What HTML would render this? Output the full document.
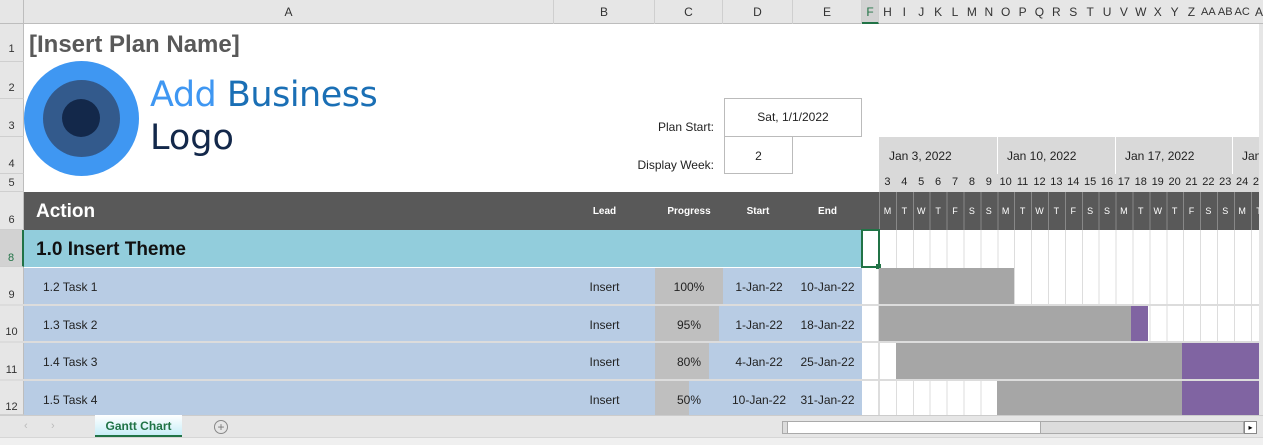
<!DOCTYPE html>
<html><head><meta charset="utf-8"><style>
*{margin:0;padding:0;box-sizing:border-box}
body{width:1263px;height:445px;overflow:hidden;background:#fff;font-family:"Liberation Sans",sans-serif;position:relative}
.a{position:absolute}
.hdr{top:0;left:0;width:1263px;height:24px;background:#e6e6e6;border-bottom:1px solid #bdbdbd}
.hc{position:absolute;top:0;height:24px;line-height:24px;text-align:center;font-size:12px;color:#333;border-right:1px solid #cfcfcf}
.rn{position:absolute;left:0;width:24px;background:#e6e6e6;border-bottom:1px solid #cfcfcf;border-right:1px solid #bdbdbd;font-size:11px;color:#333;text-align:center}
.flex{display:flex}
.flex div{width:16.9px;flex:none;text-align:center}
.t{font-size:12px;color:#222;position:absolute;text-align:center}
</style></head><body>
<div class="a hdr"></div>
<div class="hc" style="left:0;width:24px;border-right:1px solid #bdbdbd"></div>
<div class="hc" style="left:24px;width:530px">A</div>
<div class="hc" style="left:554px;width:101px">B</div>
<div class="hc" style="left:655px;width:68px">C</div>
<div class="hc" style="left:723px;width:70px">D</div>
<div class="hc" style="left:793px;width:69px">E</div>
<div class="hc" style="left:862px;width:17px;background:#d2d2d2;border-bottom:2px solid #217346;color:#217346">F</div>
<div class="a flex" style="left:879px;top:0;height:24px;line-height:24px;font-size:12px;color:#333">
<div>H</div><div>I</div><div>J</div><div>K</div><div>L</div><div>M</div><div>N</div><div>O</div><div>P</div><div>Q</div><div>R</div><div>S</div><div>T</div><div>U</div><div>V</div><div>W</div><div>X</div><div>Y</div><div>Z</div><div style="font-size:11px">AA</div><div style="font-size:11px">AB</div><div style="font-size:11px">AC</div><div>A</div></div>

<!-- row numbers -->
<div class="rn" style="top:24px;height:38px;padding-top:19px">1</div>
<div class="rn" style="top:62px;height:37px;padding-top:20px">2</div>
<div class="rn" style="top:99px;height:38px;padding-top:21px">3</div>
<div class="rn" style="top:137px;height:37px;padding-top:21px">4</div>
<div class="rn" style="top:174px;height:18px;padding-top:3px">5</div>
<div class="rn" style="top:192px;height:38px;padding-top:22px">6</div>
<div class="rn" style="top:230px;height:37px;padding-top:22px;background:#d2d2d2;color:#217346;border-right:2px solid #217346">8</div>
<div class="rn" style="top:267px;height:38px;padding-top:22px">9</div>
<div class="rn" style="top:305px;height:37px;padding-top:21px">10</div>
<div class="rn" style="top:342px;height:38px;padding-top:22px">11</div>
<div class="rn" style="top:380px;height:35px;padding-top:21px">12</div>

<!-- title + logo -->
<div class="a" style="left:29px;top:31px;font-size:24px;font-weight:bold;color:#595959">[Insert Plan Name]</div>
<div class="a" style="left:24px;top:61px;width:115px;height:115px;border-radius:50%;background:#3f97f2"></div>
<div class="a" style="left:43px;top:80px;width:77px;height:77px;border-radius:50%;background:#335a8c"></div>
<div class="a" style="left:62px;top:99px;width:38px;height:38px;border-radius:50%;background:#13284a"></div>
<div class="a" style="left:150px;top:75px;font-size:35px;color:#3f97f2;font-family:'DejaVu Sans',sans-serif;letter-spacing:-0.5px">Add <span style="color:#1a6fb5">Business</span></div>
<div class="a" style="left:150px;top:118px;font-size:35px;color:#13284a;font-family:'DejaVu Sans',sans-serif">Logo</div>

<!-- plan start -->
<div class="t" style="left:600px;top:120px;width:114px;text-align:right">Plan Start:</div>
<div class="t" style="left:600px;top:158px;width:114px;text-align:right">Display Week:</div>
<div class="a" style="left:724px;top:98px;width:138px;height:39px;border:1px solid #bbb"></div>
<div class="t" style="left:724px;top:110px;width:138px">Sat, 1/1/2022</div>
<div class="a" style="left:724px;top:136px;width:69px;height:38px;border:1px solid #bbb"></div>
<div class="t" style="left:724px;top:149px;width:69px">2</div>

<!-- gantt header -->
<div class="a" style="left:879px;top:137px;width:380px;height:55px;background:#d9d9d9"></div>
<div class="a" style="left:997px;top:137px;width:1px;height:37px;background:#fff"></div>
<div class="a" style="left:1115px;top:137px;width:1px;height:37px;background:#fff"></div>
<div class="a" style="left:1232px;top:137px;width:1px;height:37px;background:#fff"></div>
<div class="t" style="left:889px;top:149px;text-align:left">Jan 3, 2022</div>
<div class="t" style="left:1007px;top:149px;text-align:left">Jan 10, 2022</div>
<div class="t" style="left:1125px;top:149px;text-align:left">Jan 17, 2022</div>
<div class="t" style="left:1242px;top:149px;text-align:left;width:17px;overflow:hidden">Jan</div>
<div class="a flex" style="left:879px;top:176px;width:380px;overflow:hidden;font-size:11px;color:#222">
<div>3</div><div>4</div><div>5</div><div>6</div><div>7</div><div>8</div><div>9</div><div>10</div><div>11</div><div>12</div><div>13</div><div>14</div><div>15</div><div>16</div><div>17</div><div>18</div><div>19</div><div>20</div><div>21</div><div>22</div><div>23</div><div>24</div><div>25</div></div>

<!-- dark header row -->
<div class="a" style="left:24px;top:192px;width:1235px;height:38px;background:#595959"></div>
<div class="a" style="left:36px;top:201px;font-size:19px;font-weight:bold;color:#fff">Action</div>
<div class="t" style="left:554px;top:206px;width:101px;color:#fff;font-weight:bold;font-size:10px">Lead</div>
<div class="t" style="left:655px;top:206px;width:68px;color:#fff;font-weight:bold;font-size:10px">Progress</div>
<div class="t" style="left:723px;top:206px;width:70px;color:#fff;font-weight:bold;font-size:10px">Start</div>
<div class="t" style="left:793px;top:206px;width:69px;color:#fff;font-weight:bold;font-size:10px">End</div>
<div class="a flex" style="left:879px;top:192px;width:380px;height:38px;line-height:38px;overflow:hidden;font-size:9px;color:#fff;background:repeating-linear-gradient(90deg,#888 0 1px,transparent 1px 16.9px)">
<div>M</div><div>T</div><div>W</div><div>T</div><div>F</div><div>S</div><div>S</div><div>M</div><div>T</div><div>W</div><div>T</div><div>F</div><div>S</div><div>S</div><div>M</div><div>T</div><div>W</div><div>T</div><div>F</div><div>S</div><div>S</div><div>M</div><div>T</div></div>

<!-- gantt grid body -->
<div class="a" style="left:879px;top:230px;width:380px;height:185px;background:repeating-linear-gradient(90deg,#ddd 0 1px,#fff 1px 16.9px)"></div>
<div class="a" style="left:862px;top:230px;width:17px;height:185px;border-right:1px solid #ddd"></div>

<!-- theme row -->
<div class="a" style="left:24px;top:230px;width:838px;height:37px;background:#92cddc"></div>
<div class="a" style="left:36px;top:239px;font-size:19px;font-weight:bold;color:#111">1.0 Insert Theme</div>
<div class="a" style="left:861px;top:229px;width:19px;height:39px;border:2px solid #217346"></div>
<div class="a" style="left:876px;top:264px;width:5px;height:5px;background:#217346"></div>

<!-- task rows -->
<div class="a" style="left:24px;top:268px;width:838px;height:36px;background:#b8cce4"></div>
<div class="a" style="left:24px;top:306px;width:838px;height:35px;background:#b8cce4"></div>
<div class="a" style="left:24px;top:343px;width:838px;height:36px;background:#b8cce4"></div>
<div class="a" style="left:24px;top:381px;width:838px;height:34px;background:#b8cce4"></div>
<div class="a" style="left:655px;top:268px;width:68px;height:36px;background:#bfbfbf"></div>
<div class="a" style="left:655px;top:306px;width:64px;height:35px;background:#bfbfbf"></div>
<div class="a" style="left:655px;top:343px;width:54px;height:36px;background:#bfbfbf"></div>
<div class="a" style="left:655px;top:381px;width:34px;height:34px;background:#bfbfbf"></div>
<div class="a" style="left:0;top:304px;width:1259px;height:2px;background:#dcdcdc"></div>
<div class="a" style="left:0;top:341px;width:1259px;height:2px;background:#dcdcdc"></div>
<div class="a" style="left:0;top:379px;width:1259px;height:2px;background:#dcdcdc"></div>

<div class="t" style="left:43px;top:280px;text-align:left">1.2 Task 1</div>
<div class="t" style="left:43px;top:318px;text-align:left">1.3 Task 2</div>
<div class="t" style="left:43px;top:355px;text-align:left">1.4 Task 3</div>
<div class="t" style="left:43px;top:393px;text-align:left">1.5 Task 4</div>
<div class="t" style="left:554px;top:280px;width:101px">Insert</div>
<div class="t" style="left:554px;top:318px;width:101px">Insert</div>
<div class="t" style="left:554px;top:355px;width:101px">Insert</div>
<div class="t" style="left:554px;top:393px;width:101px">Insert</div>
<div class="t" style="left:655px;top:280px;width:68px">100%</div>
<div class="t" style="left:655px;top:318px;width:68px">95%</div>
<div class="t" style="left:655px;top:355px;width:68px">80%</div>
<div class="t" style="left:655px;top:393px;width:68px">50%</div>
<div class="t" style="left:723px;top:280px;width:72px">1-Jan-22</div>
<div class="t" style="left:723px;top:318px;width:72px">1-Jan-22</div>
<div class="t" style="left:723px;top:355px;width:72px">4-Jan-22</div>
<div class="t" style="left:723px;top:393px;width:72px">10-Jan-22</div>
<div class="t" style="left:793px;top:280px;width:69px">10-Jan-22</div>
<div class="t" style="left:793px;top:318px;width:69px">18-Jan-22</div>
<div class="t" style="left:793px;top:355px;width:69px">25-Jan-22</div>
<div class="t" style="left:793px;top:393px;width:69px">31-Jan-22</div>

<!-- bars -->
<div class="a" style="left:879px;top:268px;width:135px;height:36px;background:#a6a6a6"></div>
<div class="a" style="left:879px;top:306px;width:252px;height:35px;background:#a6a6a6"></div>
<div class="a" style="left:1131px;top:306px;width:17px;height:35px;background:#8064a2"></div>
<div class="a" style="left:896px;top:343px;width:286px;height:36px;background:#a6a6a6"></div>
<div class="a" style="left:1182px;top:343px;width:77px;height:36px;background:#8064a2"></div>
<div class="a" style="left:997px;top:381px;width:185px;height:34px;background:#a6a6a6"></div>
<div class="a" style="left:1182px;top:381px;width:77px;height:34px;background:#8064a2"></div>

<!-- right scrollbar strip -->
<div class="a" style="left:1259px;top:24px;width:4px;height:391px;background:#e6e6e6"></div>

<!-- bottom tab bar -->
<div class="a" style="left:0;top:415px;width:1263px;height:30px;background:#e6e6e6;border-top:1px solid #ccc"></div>
<div class="a" style="left:24px;top:420px;font-size:11px;color:#bbb">&#8249;</div>
<div class="a" style="left:51px;top:420px;font-size:11px;color:#bbb">&#8250;</div>
<div class="a" style="left:95px;top:415px;width:87px;height:22px;background:linear-gradient(#fff,#c8eef8);border-bottom:2px solid #217346;font-size:12px;font-weight:bold;color:#217346;text-align:center;line-height:22px">Gantt Chart</div>
<div class="a" style="left:214px;top:420px;width:14px;height:14px;border:1px solid #888;border-radius:50%;font-size:12px;line-height:12px;text-align:center;color:#777">+</div>
<div class="a" style="left:782px;top:421px;width:462px;height:13px;background:#dcdcdc;border:1px solid #aaa"></div>
<div class="a" style="left:787px;top:421px;width:254px;height:13px;background:#fff;border:1px solid #aaa"></div>
<div class="a" style="left:1244px;top:421px;width:13px;height:13px;background:#fff;border:1px solid #888;font-size:8px;text-align:center;line-height:11px">&#9656;</div>
<div class="a" style="left:0;top:437px;width:1263px;height:8px;background:#f0f0f0;border-top:1px solid #d6d6d6"></div>
</body></html>
